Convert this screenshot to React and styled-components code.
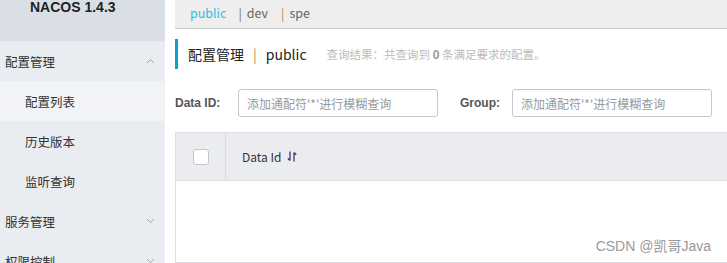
import styled, { createGlobalStyle } from "styled-components";

const GlobalStyle = createGlobalStyle`
    html, body {
        margin: 0;
        padding: 0;
        background: #ffffff;
        overflow: hidden;
    }
    body {
        font-family: "Noto Sans", "Noto Sans CJK SC", sans-serif;
    }
`

const menu = [
    { label: "配置管理", open: true, children: ["配置列表", "历史版本", "监听查询"], active: "配置列表" },
    { label: "服务管理", open: false },
    { label: "权限控制", open: false },
]

const Chevron = ({ up }) => (
    <svg width="9" height="6" viewBox="0 0 9 6">
        <path d={up ? "M1 5 L4.5 1.5 L8 5" : "M1 1 L4.5 4.5 L8 1"} fill="none" stroke="#a0a4ab" strokeWidth="1" />
    </svg>
)

const SortIcon = () => (
    <svg width="10" height="11" viewBox="0 0 10 11">
        <path d="M3 0.5 V9.5 M3 9.5 L0.8 7.2" fill="none" stroke="#4b2f72" strokeWidth="1.3" />
        <path d="M7 10.5 V1.5 M7 1.5 L9.2 3.8" fill="none" stroke="#4b2f72" strokeWidth="1.3" />
    </svg>
)

const App = () => {
    return (
        <Page>
            <GlobalStyle />
            <Sidebar>
                <Brand>NACOS 1.4.3</Brand>
                {menu.map((m) => (
                    <div key={m.label}>
                        <MenuItem>
                            <span>{m.label}</span>
                            <Chevron up={m.open} />
                        </MenuItem>
                        {m.open && m.children.map((c) => (
                            <SubItem key={c} $active={c === m.active}>{c}</SubItem>
                        ))}
                    </div>
                ))}
            </Sidebar>

            <Main>
                <NamespaceBar>
                    <NsLink $current>public</NsLink>
                    <NsSep>|</NsSep>
                    <NsLink>dev</NsLink>
                    <NsSep $orange>|</NsSep>
                    <NsLink>spe</NsLink>
                </NamespaceBar>

                <TitleRow>
                    <Title>配置管理<TitleSep>|</TitleSep>public</Title>
                    <Hint>查询结果：共查询到 <b>0</b> 条满足要求的配置。</Hint>
                </TitleRow>

                <SearchRow>
                    <Label $w="63px">Data ID:</Label>
                    <Input placeholder="添加通配符'*'进行模糊查询" />
                    <Label $w="52px" $pad="22px">Group:</Label>
                    <Input placeholder="添加通配符'*'进行模糊查询" />
                </SearchRow>

                <Table>
                    <HeadRow>
                        <CheckCell><Check /></CheckCell>
                        <HeadCell>Data Id <SortIcon /></HeadCell>
                    </HeadRow>
                    <Body />
                </Table>
            </Main>

            <Watermark>CSDN @凯哥Java</Watermark>
        </Page>
    )
}

const Page = styled.div`
    display: flex;
    width: 727px;
    height: 263px;
    overflow: hidden;
    position: relative;
`
const Sidebar = styled.div`
    width: 165px;
    flex-shrink: 0;
    background: #e9ecf0;
    font-family: "Noto Sans CJK SC", sans-serif;
`
const Brand = styled.div`
    height: 41px;
    background: #dadfe5;
    font-family: "Liberation Sans", sans-serif;
    font-weight: bold;
    font-size: 14px;
    line-height: 14px;
    color: #222;
    padding-left: 30px;
    box-sizing: border-box;
`
const MenuItem = styled.div`
    height: 40px;
    display: flex;
    align-items: center;
    justify-content: space-between;
    padding: 0 10px 0 5px;
    font-size: 12.5px;
    color: #333;
`
const SubItem = styled.div`
    height: 40px;
    display: flex;
    align-items: center;
    padding-left: 25px;
    font-size: 12.5px;
    color: #333;
    background: ${(p) => (p.$active ? "#f2f3f6" : "transparent")};
`
const Main = styled.div`
    flex: 1;
    padding-left: 10px;
    min-width: 0;
`
const NamespaceBar = styled.div`
    height: 29px;
    background: #eeeeee;
    border-bottom: 1px solid #cccccc;
    display: flex;
    align-items: center;
    padding-left: 15px;
    padding-bottom: 4px;
    box-sizing: border-box;
    font-family: "Noto Sans CJK SC", sans-serif;
    font-size: 12.5px;
`
const NsLink = styled.span`
    color: ${(p) => (p.$current ? "#33bde2" : "#666")};
`
const NsSep = styled.span`
    color: ${(p) => (p.$orange ? "#c4884a" : "#777")};
    margin: 0 5px 0 ${(p) => (p.$orange ? "13px" : "12px")};
`
const TitleRow = styled.div`
    margin-top: 10px;
    height: 30px;
    border-left: 3px solid #0e9fd4;
    display: flex;
    align-items: center;
    padding-left: 10px;
    font-family: "Noto Sans CJK SC", sans-serif;
`
const Title = styled.div`
    font-size: 14px;
    color: #222;
`
const TitleSep = styled.span`
    color: #c4884a;
    margin: 0 9px;
`
const Hint = styled.div`
    font-size: 11.5px;
    color: #bbbbbb;
    margin-left: 20px;
    b {
        color: #999;
    }
`
const SearchRow = styled.div`
    margin-top: 20px;
    display: flex;
    align-items: center;
    height: 28px;
`
const Label = styled.div`
    width: ${(p) => p.$w};
    margin-left: ${(p) => p.$pad || "0"};
    font-family: "Liberation Sans", sans-serif;
    font-weight: bold;
    font-size: 12px;
    color: #555;
`
const Input = styled.input`
    width: 200px;
    height: 28px;
    box-sizing: border-box;
    border: 1px solid #c4c6cf;
    border-radius: 3px;
    padding: 0 8px;
    font-family: "Noto Sans CJK SC", sans-serif;
    font-size: 12px;
    outline: none;
    &::placeholder {
        color: #999;
    }
`
const Table = styled.div`
    margin-top: 15px;
    border: 1px solid #dcdee3;
    border-right: none;
`
const HeadRow = styled.div`
    display: flex;
    height: 47px;
    background: #ebecf0;
    border-bottom: 1px solid #dcdee3;
`
const CheckCell = styled.div`
    width: 49px;
    display: flex;
    align-items: center;
    justify-content: center;
    border-right: 1px solid #dcdee3;
`
const Check = styled.div`
    width: 14px;
    height: 14px;
    background: #fff;
    border: 1px solid #c4c6cf;
    border-radius: 3px;
`
const HeadCell = styled.div`
    display: flex;
    align-items: center;
    gap: 6px;
    padding-left: 16px;
    font-family: "Noto Sans CJK SC", sans-serif;
    font-size: 12px;
    color: #333;
`
const Body = styled.div`
    height: 81px;
    background: #fff;
`
const Watermark = styled.div`
    position: absolute;
    right: 16px;
    bottom: 8px;
    font-family: "Liberation Sans", "Noto Sans CJK SC", sans-serif;
    font-size: 14px;
    color: #9a9a9a;
`

export default App;
